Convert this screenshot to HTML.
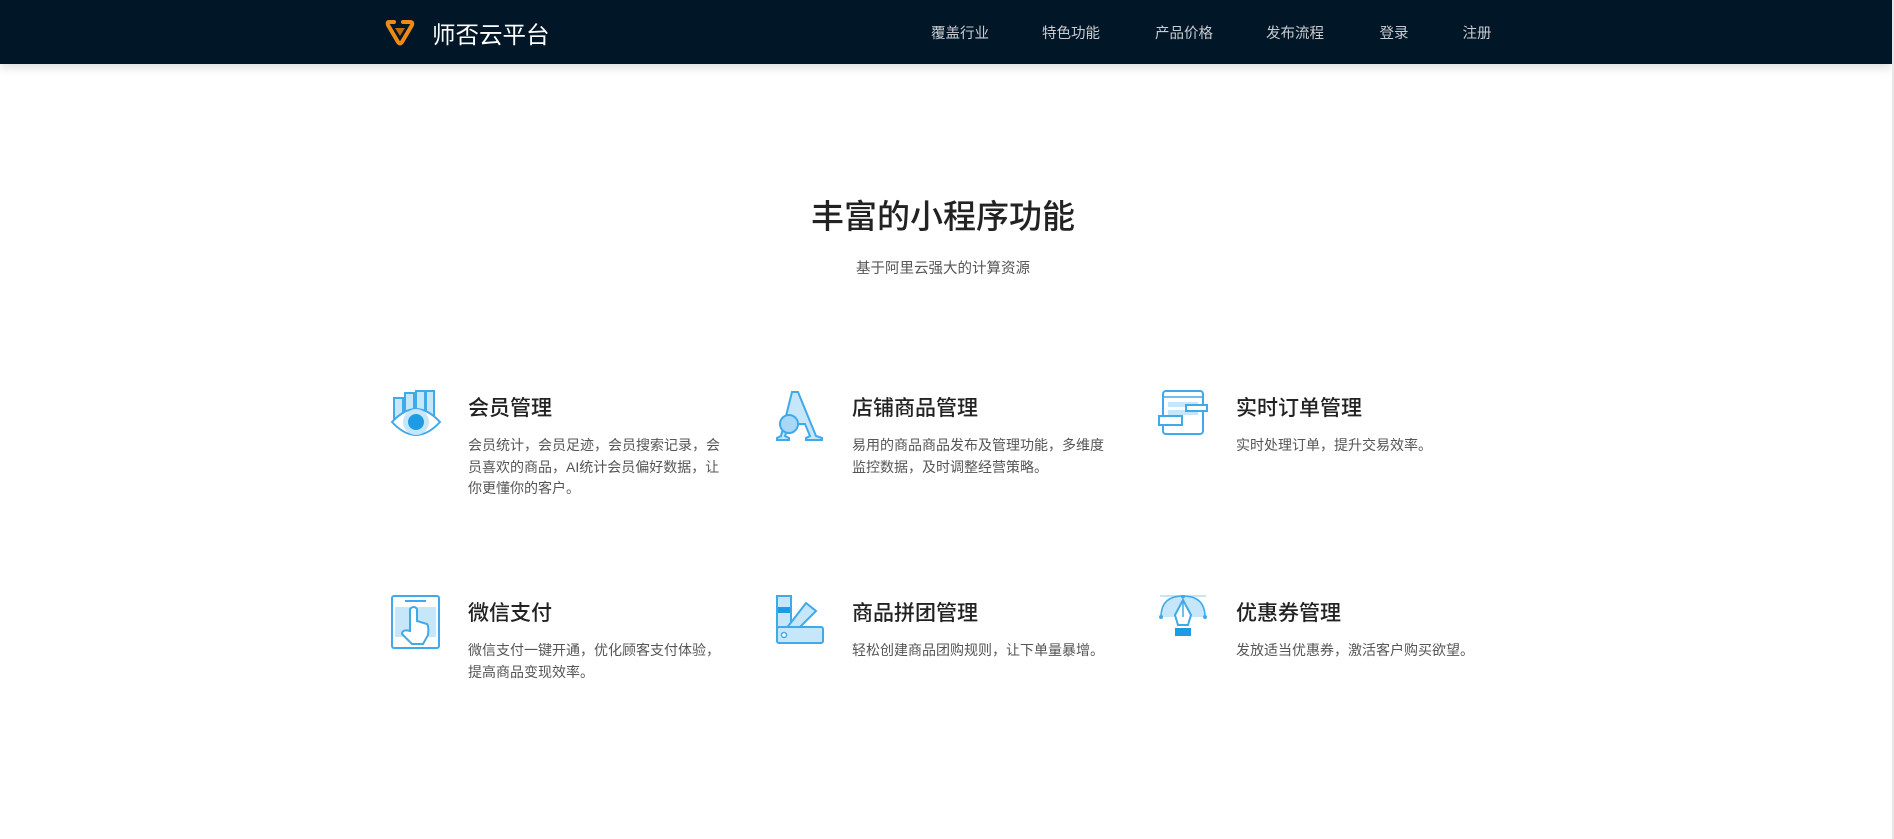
<!DOCTYPE html>
<html><head><meta charset="utf-8"><style>
*{margin:0;padding:0;box-sizing:border-box}
body{width:1894px;height:839px;overflow:hidden;background:#fff;font-family:"Liberation Sans","Noto Sans CJK SC",sans-serif;position:relative}
.nav{position:absolute;left:0;top:0;width:1892px;height:64px;background:#011627;box-shadow:0 3px 10px rgba(0,0,0,.15)}
.sb{position:absolute;right:0;top:0;width:2px;height:839px;background:#e6e6e6}
.logo{position:absolute;left:385px;top:18px}
.brand{position:absolute;left:432px;top:16px;color:#fff;font-size:23.5px;letter-spacing:0}
.nav a{position:absolute;top:22px;color:#c9ccd0;font-size:14.5px;text-decoration:none;transform:translateX(-50%)}
h1{position:absolute;left:0;width:1886px;text-align:center;top:190px;font-size:33px;font-weight:500;color:#222}
.sub{position:absolute;left:0;width:1886px;text-align:center;top:257px;font-size:14.5px;color:#555}
.f{position:absolute;width:300px}
.f svg{position:absolute;left:0;top:0}
.f h3{position:absolute;left:78px;top:2px;font-size:21px;font-weight:500;color:#222;white-space:nowrap}
.f p{position:absolute;left:78px;top:45px;width:258px;font-size:14px;line-height:21.6px;color:#555}
</style></head><body>
<div class="nav">
<svg class="logo" width="30" height="28" viewBox="0 0 30 28"><path d="M9 4 L4 4 Q2 4 3 7 L13 24 Q15 27 17 24 L27 7 Q28 4 25 4 L18 4" fill="none" stroke="#f08a16" stroke-width="4" stroke-linecap="round"/><path d="M10 10 L20 10 L15 18 Z" fill="#c4660a"/></svg>
<div class="brand">师否云平台</div>
<a style="left:960px">覆盖行业</a><a style="left:1071px">特色功能</a><a style="left:1184px">产品价格</a><a style="left:1295px">发布流程</a><a style="left:1394px">登录</a><a style="left:1477px">注册</a>
</div>
<div class="sb"></div>
<h1>丰富的小程序功能</h1>
<div class="sub">基于阿里云强大的计算资源</div>

<div class="f" style="left:390px;top:390px">
<svg width="52" height="54" viewBox="0 0 52 54"><g fill="#c6e6f9" stroke="#3fa9ea" stroke-width="2"><rect x="4" y="8" width="9" height="26"/><rect x="15" y="3" width="9" height="26"/><rect x="26" y="1" width="9" height="26"/><rect x="36" y="1" width="8" height="26"/></g><path d="M2 32 Q26 6 50 32 Q26 58 2 32Z" fill="#fff" stroke="#3fa9ea" stroke-width="2"/><circle cx="26" cy="32" r="13" fill="#c6e6f9"/><circle cx="26" cy="32" r="8" fill="#1e9be5"/></svg>
<h3>会员管理</h3><p>会员统计，会员足迹，会员搜索记录，会员喜欢的商品，AI统计会员偏好数据，让你更懂你的客户。</p></div>

<div class="f" style="left:774px;top:390px">
<svg width="52" height="52" viewBox="0 0 52 52"><path d="M18 2 L24 2 L42 46 L48 48 L48 50 L32 50 L32 48 L36 46 L31 34 L15 34 L11 46 L15 48 L15 50 L3 50 L3 48 L7 46 Z" fill="#c6e6f9" stroke="#3fa9ea" stroke-width="2"/><circle cx="15" cy="34" r="9" fill="#a8d8f5" stroke="#3fa9ea" stroke-width="2"/></svg>
<h3>店铺商品管理</h3><p>易用的商品商品发布及管理功能，多维度监控数据，及时调整经营策略。</p></div>

<div class="f" style="left:1158px;top:390px">
<svg width="52" height="46" viewBox="0 0 52 46"><rect x="5" y="1" width="40" height="43" rx="3" fill="#fff" stroke="#3fa9ea" stroke-width="2"/><line x1="5" y1="7" x2="45" y2="7" stroke="#3fa9ea" stroke-width="1.5"/><rect x="10" y="12" width="30" height="5" fill="#c6e6f9"/><rect x="10" y="20" width="30" height="5" fill="#c6e6f9"/><rect x="28" y="15" width="21" height="6" fill="#fff" stroke="#3fa9ea" stroke-width="2"/><rect x="1" y="26" width="23" height="9" fill="#fff" stroke="#3fa9ea" stroke-width="2"/></svg>
<h3>实时订单管理</h3><p>实时处理订单，提升交易效率。</p></div>

<div class="f" style="left:390px;top:595px">
<svg width="52" height="54" viewBox="0 0 52 54"><rect x="2" y="1" width="47" height="52" rx="2" fill="#fff" stroke="#3fa9ea" stroke-width="2"/><line x1="15" y1="6" x2="36" y2="6" stroke="#3fa9ea" stroke-width="2"/><rect x="5" y="12" width="41" height="30" fill="#c6e6f9"/><path d="M20 32 L20 14 Q24 10 27 14 L27 26 L37 29 Q39 31 38 40 L33 49 L22 49 L12 39 Q12 34 20 36 Z" fill="#fff" stroke="#3fa9ea" stroke-width="2"/></svg>
<h3>微信支付</h3><p>微信支付一键开通，优化顾客支付体验，提高商品变现效率。</p></div>

<div class="f" style="left:774px;top:595px">
<svg width="52" height="52" viewBox="0 0 52 52"><rect x="3" y="1" width="14" height="32" fill="#c6e6f9" stroke="#3fa9ea" stroke-width="2"/><rect x="4" y="12" width="12" height="6" fill="#1e9be5"/><path d="M12 34 L32 8 L42 16 L24 34Z" fill="#c6e6f9" stroke="#3fa9ea" stroke-width="2"/><rect x="3" y="32" width="46" height="16" rx="2" fill="#c6e6f9" stroke="#3fa9ea" stroke-width="2"/><circle cx="10" cy="40" r="2.5" fill="#fff" stroke="#3fa9ea" stroke-width="1.5"/></svg>
<h3>商品拼团管理</h3><p>轻松创建商品团购规则，让下单量暴增。</p></div>

<div class="f" style="left:1158px;top:595px">
<svg width="52" height="54" viewBox="0 0 52 54"><line x1="2" y1="1" x2="48" y2="1" stroke="#b5dcf5" stroke-width="1.5"/><path d="M3 22 Q3 1 25 1 Q47 1 47 22 Z" fill="#c6e6f9"/><path d="M3 22 Q3 1 25 1 Q47 1 47 22" fill="none" stroke="#3fa9ea" stroke-width="1.5"/><circle cx="3" cy="22" r="2" fill="#3fa9ea"/><circle cx="47" cy="22" r="2" fill="#3fa9ea"/><circle cx="25" cy="1.5" r="2" fill="#3fa9ea"/><path d="M25 5 L17 20 L20 30 L30 30 L33 20 Z" fill="#fff" stroke="#3fa9ea" stroke-width="2"/><line x1="25" y1="5" x2="25" y2="22" stroke="#3fa9ea" stroke-width="1.5"/><rect x="17" y="33" width="16" height="8" fill="#1e9be5"/></svg>
<h3>优惠券管理</h3><p>发放适当优惠券，激活客户购买欲望。</p></div>
</body></html>
